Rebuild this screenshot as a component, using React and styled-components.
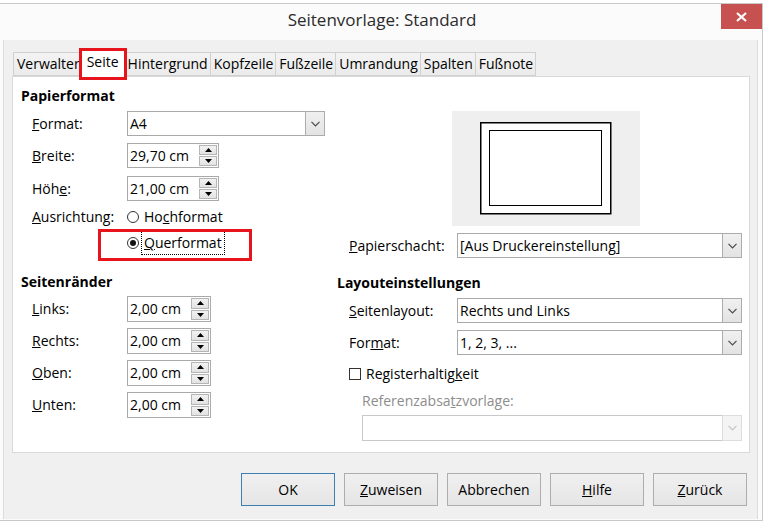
import React from "react";
import styled, { createGlobalStyle } from "styled-components";

const GlobalStyle = createGlobalStyle`
  html, body {
    margin: 0;
    padding: 0;
    background: #ffffff;
  }
  body {
    font-family: "Open Sans", "Liberation Sans", sans-serif;
    font-size: 14px;
    color: #000;
  }
  * {
    box-sizing: border-box;
  }
`;

const Key = ({ children }) => <u>{children}</u>;

const Chevron = ({ disabled }) => (
  <svg width="9" height="6" viewBox="0 0 9 6">
    <polyline
      points="0.5,0.8 4.5,4.8 8.5,0.8"
      fill="none"
      stroke={disabled ? "#c4c4c4" : "#4a4a4a"}
      strokeWidth="1.2"
    />
  </svg>
);

const Arrow = ({ down }) => (
  <svg width="7" height="4" viewBox="0 0 7 4">
    <polygon points={down ? "0,0 7,0 3.5,4" : "0,4 7,4 3.5,0"} fill="#000" />
  </svg>
);

const Select = ({ value, width, height = 25, disabled }) => (
  <SelectBox $width={width} $height={height} $disabled={disabled}>
    <SelectValue>{value}</SelectValue>
    <DropButton $disabled={disabled}>
      <Chevron disabled={disabled} />
    </DropButton>
  </SelectBox>
);

const SpinField = ({ value, width, height = 25 }) => (
  <InputBox $width={width} $height={height}>
    <SelectValue>{value}</SelectValue>
    <Spin>
      <SpinButton>
        <Arrow />
      </SpinButton>
      <SpinButton>
        <Arrow down />
      </SpinButton>
    </Spin>
  </InputBox>
);

const PagePreview = () => (
  <Preview>
    <svg width="132" height="93" viewBox="0 0 132 93">
      <rect x="0.75" y="0.75" width="130" height="91" fill="#fff" stroke="#000" strokeWidth="1.5" />
      <rect x="9.5" y="8.5" width="112" height="75" fill="#fff" stroke="#000" strokeWidth="1" />
    </svg>
  </Preview>
);

const tabs = ["Verwalter", "Seite", "Hintergrund", "Kopfzeile", "Fußzeile", "Umrandung", "Spalten", "Fußnote"];

const App = () => {
  return (
    <>
      <GlobalStyle />
      <Window>
        <TitleBar>
          <span />
          <Title>Seitenvorlage: Standard</Title>
          <CloseButton>
            <svg width="11" height="10" viewBox="0 0 11 10">
              <path d="M1 1 L10 9 M10 1 L1 9" stroke="#fff" strokeWidth="2.2" />
            </svg>
          </CloseButton>
        </TitleBar>
        <Client>
          <TabStrip>
            {tabs.map((t) => (
              <Tab key={t} $active={t === "Seite"}>
                {t}
                {t === "Seite" && <Highlight />}
              </Tab>
            ))}
          </TabStrip>
          <Panel>
            <Column>
              <SectionHeading $mt={9}>Papierformat</SectionHeading>
              <FieldRow $mt={5} $label={95} $indent={11}>
                <Label>
                  <Key>F</Key>ormat:
                </Label>
                <Select value="A4" width={198} />
              </FieldRow>
              <FieldRow $mt={7} $label={95} $indent={11}>
                <Label>
                  <Key>B</Key>reite:
                </Label>
                <SpinField value="29,70 cm" width={92} />
              </FieldRow>
              <FieldRow $mt={8} $label={95} $indent={11}>
                <Label>
                  Höh<Key>e</Key>:
                </Label>
                <SpinField value="21,00 cm" width={92} />
              </FieldRow>
              <FieldRow $mt={6} $label={95} $indent={11} $h={20}>
                <Label>
                  <Key>A</Key>usrichtung:
                </Label>
                <Option>
                  <Radio />
                  <OptionText>
                    Ho<Key>c</Key>hformat
                  </OptionText>
                </Option>
              </FieldRow>
              <FieldRow $mt={6} $label={95} $indent={11} $h={20}>
                <span />
                <Option>
                  <Radio $checked />
                  <OptionText $focus>
                    <Key>Q</Key>uerformat
                  </OptionText>
                  <RadioHighlight />
                </Option>
              </FieldRow>
              <SectionHeading $mt={19}>Seitenränder</SectionHeading>
              <FieldRow $mt={4} $label={95} $indent={11} $h={26}>
                <Label>
                  <Key>L</Key>inks:
                </Label>
                <SpinField value="2,00 cm" width={84} height={26} />
              </FieldRow>
              <FieldRow $mt={6} $label={95} $indent={11} $h={26}>
                <Label>
                  <Key>R</Key>echts:
                </Label>
                <SpinField value="2,00 cm" width={84} height={26} />
              </FieldRow>
              <FieldRow $mt={6} $label={95} $indent={11} $h={26}>
                <Label>
                  <Key>O</Key>ben:
                </Label>
                <SpinField value="2,00 cm" width={84} height={26} />
              </FieldRow>
              <FieldRow $mt={6} $label={95} $indent={11} $h={26}>
                <Label>
                  <Key>U</Key>nten:
                </Label>
                <SpinField value="2,00 cm" width={84} height={26} />
              </FieldRow>
            </Column>
            <Column $right>
              <PagePreview />
              <FieldRow $mt={7} $label={108} $indent={12}>
                <Label>
                  <Key>P</Key>apierschacht:
                </Label>
                <Select value="[Aus Druckereinstellung]" />
              </FieldRow>
              <SectionHeading $mt={15}>Layouteinstellungen</SectionHeading>
              <FieldRow $mt={5} $label={108} $indent={12}>
                <Label>
                  <Key>S</Key>eitenlayout:
                </Label>
                <Select value="Rechts und Links" />
              </FieldRow>
              <FieldRow $mt={7} $label={108} $indent={12}>
                <Label>
                  For<Key>m</Key>at:
                </Label>
                <Select value="1, 2, 3, ..." />
              </FieldRow>
              <CheckRow>
                <CheckBox />
                <OptionText>
                  Registerhaltig<Key>k</Key>eit
                </OptionText>
              </CheckRow>
              <SubLabel>
                Referenzabsa<Key>t</Key>zvorlage:
              </SubLabel>
              <SubField>
                <Select value="" height={26} disabled />
              </SubField>
            </Column>
          </Panel>
          <ButtonBar>
            <Button $default>OK</Button>
            <Button>
              <Key>Z</Key>uweisen
            </Button>
            <Button>Abbrechen</Button>
            <Button>
              <Key>H</Key>ilfe
            </Button>
            <Button>
              <Key>Z</Key>urück
            </Button>
          </ButtonBar>
        </Client>
      </Window>
    </>
  );
};

const Window = styled.div`
  width: 763px;
  margin-top: 3px;
  background: #fbfbfb;
  border-top: 1px solid #c9c9c9;
  border-right: 1px solid #c9c9c9;
  border-bottom: 1px solid #c9c9c9;
  padding-bottom: 1px;
`;

const TitleBar = styled.div`
  height: 36px;
  display: grid;
  grid-template-columns: 1fr auto 1fr;
`;

const Title = styled.div`
  padding-top: 4px;
  font-size: 17px;
  line-height: 24px;
  color: #2b2b2b;
  margin-left: 2px;
`;

const CloseButton = styled.div`
  justify-self: end;
  width: 41px;
  height: 25px;
  background: #c75050;
  display: flex;
  align-items: center;
  justify-content: center;
`;

const Client = styled.div`
  margin: 0 4px 0 3px;
  height: 479px;
  background: #f0f0f0;
  border-left: 1px solid #dcdcdc;
  border-right: 1px solid #dcdcdc;
  padding: 8px 7px 0 8px;
`;

const TabStrip = styled.div`
  position: relative;
  z-index: 1;
  display: flex;
  align-items: flex-end;
  height: 29px;
  margin-bottom: -1px;
  padding-left: 1px;
`;

const Tab = styled.div`
  position: relative;
  height: ${({ $active }) => ($active ? "29px" : "24px")};
  margin: ${({ $active }) => ($active ? "0 -2px 0 -2px" : "0 -1px 1px 0")};
  z-index: ${({ $active }) => ($active ? 2 : 0)};
  padding: ${({ $active }) => ($active ? "2px 6px 0" : "0 2px 0 3px")};
  background: ${({ $active }) => ($active ? "#ffffff" : "linear-gradient(#f3f3f3, #ebebeb)")};
  border: 1px solid #d0d0d0;
  border-bottom: ${({ $active }) => ($active ? "none" : "1px solid #d0d0d0")};
  font-size: 14px;
  line-height: 21px;
  white-space: nowrap;
`;

const Highlight = styled.span`
  position: absolute;
  top: -1px;
  left: -2px;
  right: -2px;
  bottom: -3px;
  border: 3px solid #e8141b;
  pointer-events: none;
`;

const Panel = styled.div`
  height: 377px;
  background: #fff;
  border: 1px solid #d9d9d9;
  display: grid;
  grid-template-columns: 316px 1fr;
  align-items: start;
`;

const Column = styled.div`
  display: flex;
  flex-direction: column;
  padding: ${({ $right }) => ($right ? "0 7px 0 8px" : "0 0 0 8px")};
`;

const SectionHeading = styled.div`
  margin-top: ${({ $mt }) => $mt}px;
  height: 20px;
  line-height: 20px;
  font-weight: 700;
  font-size: 14px;
`;

const FieldRow = styled.div`
  position: relative;
  margin-top: ${({ $mt }) => $mt}px;
  height: ${({ $h }) => $h || 25}px;
  padding-left: ${({ $indent }) => $indent}px;
  display: grid;
  grid-template-columns: ${({ $label }) => $label}px 1fr;
  align-items: center;
`;

const Label = styled.span`
  white-space: nowrap;
  line-height: 20px;
`;

const SelectBox = styled.div`
  width: ${({ $width }) => ($width ? `${$width}px` : "100%")};
  height: ${({ $height }) => $height}px;
  border: 1px solid ${({ $disabled }) => ($disabled ? "#c9c9c9" : "#a9a9a9")};
  background: #fff;
  display: flex;
  align-items: stretch;
`;

const SelectValue = styled.span`
  flex: 1;
  padding-left: 2px;
  line-height: 23px;
  white-space: nowrap;
  overflow: hidden;
`;

const DropButton = styled.span`
  width: 20px;
  margin: -1px -1px -1px 0;
  border: 1px solid ${({ $disabled }) => ($disabled ? "#dcdcdc" : "#acacac")};
  background: ${({ $disabled }) => ($disabled ? "#f4f4f4" : "linear-gradient(#f0f0f0, #e3e3e3)")};
  display: flex;
  align-items: center;
  justify-content: center;
`;

const InputBox = styled.div`
  width: ${({ $width }) => $width}px;
  height: ${({ $height }) => $height}px;
  border: 1px solid #a9a9a9;
  background: #fff;
  display: flex;
  align-items: stretch;
`;

const Spin = styled.span`
  width: 19px;
  padding: 1px 1px 1px 0;
  display: flex;
  flex-direction: column;
  gap: 1px;
`;

const SpinButton = styled.span`
  flex: 1;
  border: 1px solid #b5b5b5;
  background: linear-gradient(#f2f2f2, #e2e2e2);
  display: flex;
  align-items: center;
  justify-content: center;
`;

const Option = styled.span`
  position: relative;
  display: flex;
  align-items: center;
  gap: 4px;
  height: 20px;
`;

const Radio = styled.span`
  width: 12px;
  height: 12px;
  border-radius: 50%;
  border: 1px solid #333;
  background: #fff;
  display: flex;
  align-items: center;
  justify-content: center;
  &::after {
    content: "";
    width: 6px;
    height: 6px;
    border-radius: 50%;
    background: ${({ $checked }) => ($checked ? "#111" : "transparent")};
  }
`;

const OptionText = styled.span`
  line-height: 20px;
  white-space: nowrap;
  padding: 0 1px;
  outline: ${({ $focus }) => ($focus ? "1px dotted #000" : "none")};
  outline-offset: 1px;
`;

const RadioHighlight = styled.span`
  position: absolute;
  left: -29px;
  top: -4px;
  width: 154px;
  height: 32px;
  border: 3px solid #e8141b;
  pointer-events: none;
`;

const Preview = styled.div`
  margin-top: 34px;
  margin-left: 115px;
  width: 188px;
  height: 115px;
  background: #efefef;
  display: flex;
  align-items: center;
  justify-content: center;
`;

const CheckRow = styled.div`
  margin-top: 9px;
  height: 20px;
  padding-left: 12px;
  display: flex;
  align-items: center;
  gap: 4px;
`;

const CheckBox = styled.span`
  width: 12px;
  height: 12px;
  border: 1px solid #333;
  background: #fff;
`;

const SubLabel = styled.div`
  margin-top: 7px;
  height: 20px;
  line-height: 20px;
  padding-left: 25px;
  color: #8d8d8d;
`;

const SubField = styled.div`
  margin-top: 4px;
  padding-left: 25px;
`;

const ButtonBar = styled.div`
  margin-top: 20px;
  padding-right: 3px;
  display: flex;
  justify-content: flex-end;
  gap: 9px;
`;

const Button = styled.div`
  width: 94px;
  height: 33px;
  border: 1px solid ${({ $default }) => ($default ? "#3c7fb1" : "#adadad")};
  background: linear-gradient(#f0f0f0, #e5e5e5);
  display: flex;
  align-items: center;
  justify-content: center;
  font-size: 14px;
`;

export default App;
